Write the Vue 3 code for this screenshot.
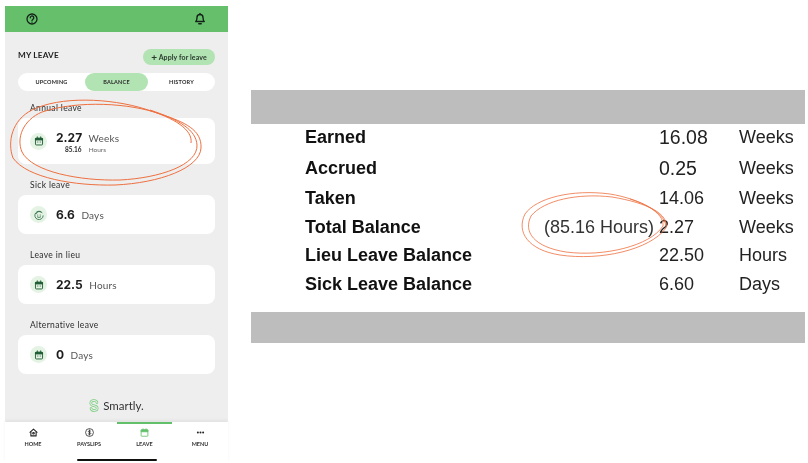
<template>
  <div class="page">
    <div class="phone">
      <header class="top-bar">
        <svg class="top-icon" viewBox="0 0 24 24" fill="none" stroke="#14221a" stroke-width="2.600">
          <circle cx="12" cy="12" r="10" />
          <path d="M8.500 9.500a3.500 3.500 0 1 1 5.400 2.900c-1.200.8-1.900 1.300-1.900 2.800" stroke-linecap="round" />
          <circle cx="12" cy="18.300" r="1.300" fill="#14221a" stroke="none" />
        </svg>
        <svg class="top-icon" viewBox="0 0 24 24" fill="none" stroke="#14221a" stroke-width="2.800">
          <path d="M12 3a6 6 0 0 0-6 6c0 5-1.500 7-2.500 8h17c-1-1-2.500-3-2.500-8a6 6 0 0 0-6-6z" stroke-linejoin="round" />
          <path d="M9.500 21.500h5M12 1v2" stroke-linecap="round" />
        </svg>
      </header>

      <main class="content">
        <div class="title-row">
          <h1>MY LEAVE</h1>
          <button class="apply-btn"><span class="plus">+</span> Apply for leave</button>
        </div>

        <nav class="tabs">
          <span v-for="tab in tabs" :key="tab" class="tab" :class="{ active: tab === 'BALANCE' }">{{ tab }}</span>
        </nav>

        <section v-for="item in leaves" :key="item.label" class="leave" :class="{ tall: item.sub }">
          <h2>{{ item.label }}</h2>
          <div class="card">
            <span class="badge">
              <svg v-if="item.icon === 'calendar'" viewBox="0 0 24 24" fill="none" stroke="#1f5c34" stroke-width="2.200">
                <rect x="3.500" y="5" width="17" height="16.500" rx="2" />
                <path d="M3.500 6h17v3.500h-17z" fill="#1f5c34" />
                <path d="M8 2v4M16 2v4" stroke-linecap="round" />
                <path d="M7 14.500h3.500M13.500 14.500H17" stroke-width="1.600" />
              </svg>
              <svg v-else viewBox="0 0 24 24" fill="none" stroke="#2f6a44" stroke-width="2">
                <path d="M20 7a10 10 0 1 0 2 6" />
                <path d="M17 5a7.500 7.500 0 0 0-12 4" stroke-linecap="round" />
                <circle cx="9" cy="12" r="1.300" fill="#2f6a44" stroke="none" />
                <circle cx="15" cy="12" r="1.300" fill="#2f6a44" stroke="none" />
                <path d="M8 16.500c2.500 1.800 5.500 1.800 8 0" stroke-linecap="round" />
              </svg>
            </span>
            <div class="amounts">
              <div class="amount">
                <strong>{{ item.value }}</strong>
                <span>{{ item.unit }}</span>
              </div>
              <div v-if="item.sub" class="sub-amount">
                <b>{{ item.sub }}</b>
                <span>Hours</span>
              </div>
            </div>
          </div>
        </section>

        <div class="brand">
          <svg viewBox="0 0 20 26" fill="none" stroke-linecap="round">
            <path stroke="#72cc78" stroke-width="5" d="M16 7C15 4 12 3 10 3 6 3 3.500 5.500 3.500 8.500 3.500 11 5 12.500 10 13.500c5 1 6.500 2.500 6.500 5C16.500 21 14 23 10 23 7.500 23 5 22 4 19" />
            <path stroke="#eeeeee" stroke-width="2.200" d="M16 7C15 4 12 3 10 3 6 3 3.500 5.500 3.500 8.500 3.500 11 5 12.500 10 13.500c5 1 6.500 2.500 6.500 5C16.500 21 14 23 10 23 7.500 23 5 22 4 19" />
          </svg>
          <span>Smartly.</span>
        </div>
      </main>

      <footer class="tab-bar">
        <div class="nav-item">
          <svg viewBox="0 0 24 24" fill="none" stroke="#222" stroke-width="2.800" stroke-linejoin="round">
            <path d="M2.500 11.500 12 3l9.500 8.500" stroke-linecap="round" />
            <path d="M5 10v11h14V10" />
            <circle cx="12" cy="14" r="2.200" />
          </svg>
          <span>HOME</span>
        </div>
        <div class="nav-item">
          <svg viewBox="0 0 24 24" fill="none" stroke="#222" stroke-width="2">
            <circle cx="12" cy="12" r="10.500" />
            <path d="M15.500 8.500C14.500 7 9 6.500 9 9.500c0 3 6.500 2 6.500 5 0 3-5.500 2.500-7 1M12 5v14" stroke-linecap="round" />
          </svg>
          <span>PAYSLIPS</span>
        </div>
        <div class="nav-item current">
          <svg viewBox="0 0 24 24" fill="none" stroke="#62c06a" stroke-width="2.200">
            <rect x="3" y="5" width="18" height="17" rx="2" />
            <path d="M3 5h18v5H3z" fill="#62c06a" />
            <path d="M8 2v4M16 2v4" stroke-linecap="round" />
          </svg>
          <span>LEAVE</span>
        </div>
        <div class="nav-item">
          <svg viewBox="0 0 24 24" fill="#222">
            <circle cx="5" cy="12" r="2.600" />
            <circle cx="12" cy="12" r="2.600" />
            <circle cx="19" cy="12" r="2.600" />
          </svg>
          <span>MENU</span>
        </div>
        <i class="home-line"></i>
      </footer>
    </div>

    <div class="statement">
      <div class="band top"></div>
      <div class="rows">
        <div v-for="(row, i) in rows" :key="row.label" class="row" :style="{ height: row.h + 'px' }">
          <b>{{ row.label }}</b>
          <span class="note">{{ row.note }}</span>
          <span class="num" :class="{ big: i < 2 }">{{ row.value }}</span>
          <span>{{ row.unit }}</span>
        </div>
      </div>
      <div class="band"></div>
    </div>

    <svg class="scribble" width="808" height="463" viewBox="0 0 808 463" fill="none" stroke="#ee7040">
      <path stroke-width="1" d="M191 143C193 130 175 118 145 109C110 98 60 96 32 110C12 120 7 142 13 158C27 178 75 186 115 185C160 183 200 168 201 148C202 130 185 122 160 114C130 103 78 100 42 112C23 120 16 138 22 152C32 172 80 181 120 180C160 178 198 165 197 145C196 130 180 120 150 110" />
      <path stroke-width="0.800" d="M666 226C664 212 640 199 610 194C572 189 536 198 525 214C516 232 528 250 560 255C600 261 650 250 666 228C669 214 648 203 612 197C578 193 544 200 531 216C523 232 534 247 566 252C604 257 650 246 663 226C664 216 652 206 630 199" />
    </svg>
  </div>
</template>

<script setup>
const tabs = ['UPCOMING', 'BALANCE', 'HISTORY']

const leaves = [
  { label: 'Annual leave', value: '2.27', unit: 'Weeks', sub: '85.16', icon: 'calendar' },
  { label: 'Sick leave', value: '6.6', unit: 'Days', icon: 'sick' },
  { label: 'Leave in lieu', value: '22.5', unit: 'Hours', icon: 'calendar' },
  { label: 'Alternative leave', value: '0', unit: 'Days', icon: 'calendar' }
]

const rows = [
  { label: 'Earned', value: '16.08', unit: 'Weeks', h: 31 },
  { label: 'Accrued', value: '0.25', unit: 'Weeks', h: 31 },
  { label: 'Taken', value: '14.06', unit: 'Weeks', h: 29 },
  { label: 'Total Balance', note: '(85.16 Hours)', value: '2.27', unit: 'Weeks', h: 29 },
  { label: 'Lieu Leave Balance', value: '22.50', unit: 'Hours', h: 27 },
  { label: 'Sick Leave Balance', value: '6.60', unit: 'Days', h: 30 }
]
</script>

<style>
html,
body {
  background: #fff;
}
</style>

<style scoped>
.page {
  position: relative;
  width: 808px;
  height: 463px;
  overflow: hidden;
  display: flex;
  align-items: flex-start;
  background: #fff;
}

.phone {
  width: 223px;
  height: 457px;
  margin: 6px 23px 0 5px;
  flex: none;
  display: flex;
  flex-direction: column;
  background: #eeeeee;
  font-family: Lato, "Noto Sans", sans-serif;
  color: #222;
  filter: blur(0.35px);
}

.top-bar {
  height: 26px;
  flex: none;
  padding: 0 22px 0 21px;
  display: flex;
  align-items: center;
  justify-content: space-between;
  background: #66c06b;
}

.top-icon {
  width: 12px;
  height: 12px;
}

.content {
  flex: 1;
  padding: 17px 13px 0;
}

.title-row {
  height: 16px;
  display: flex;
  align-items: center;
  justify-content: space-between;
}

.title-row h1 {
  margin: 0 0 4px;
  font-size: 8.200px;
  font-weight: 700;
  letter-spacing: 0.2px;
}

.apply-btn {
  width: 72px;
  height: 16px;
  padding: 0;
  border: none;
  border-radius: 8px;
  background: #b2e3b3;
  color: #2a3a2e;
  font-family: inherit;
  font-size: 7px;
  font-weight: 700;
  letter-spacing: 0.1px;
}

.plus {
  font-size: 10px;
  line-height: 1;
  vertical-align: -1px;
}

.tabs {
  height: 18px;
  margin-top: 8px;
  display: grid;
  grid-template-columns: 67px 63px 1fr;
  background: #fff;
  border-radius: 9px;
}

.tab {
  display: flex;
  align-items: center;
  justify-content: center;
  border-radius: 9px;
  font-size: 5.500px;
  font-weight: 700;
  letter-spacing: 0.2px;
  color: #2b2b2b;
}

.tab.active {
  background: #b2e3b3;
}

.leave {
  margin-top: 12px;
}

.leave + .leave {
  margin-top: 16px;
}

.leave h2 {
  margin: 0 0 5px 12px;
  font-size: 8.500px;
  line-height: 10px;
  font-weight: 400;
  letter-spacing: 0.35px;
  color: #2b2b2b;
}

.card {
  height: 39px;
  padding-left: 12px;
  display: flex;
  align-items: center;
  gap: 9px;
  background: #fff;
  border-radius: 8px;
}

.tall .card {
  height: 46px;
}

.badge {
  width: 17px;
  height: 17px;
  flex: none;
  display: flex;
  align-items: center;
  justify-content: center;
  border-radius: 50%;
  background: #e4f3e4;
}

.badge svg {
  width: 10px;
  height: 10px;
}

.amount {
  display: flex;
  align-items: baseline;
  gap: 6.500px;
  font-size: 10px;
  color: #555;
  letter-spacing: 0.2px;
}

.amount strong {
  font-family: Inter, sans-serif;
  font-size: 12px;
  font-weight: 700;
  letter-spacing: 0;
  color: #1c1c1c;
}

.sub-amount {
  margin-top: 1px;
  display: flex;
  gap: 7px;
  padding-left: 9px;
  font-size: 6.500px;
  color: #666;
}

.sub-amount b {
  color: #2a2a2a;
}

.brand {
  margin-top: 25px;
  display: flex;
  align-items: center;
  justify-content: center;
  gap: 4px;
  font-size: 11.500px;
  color: #333;
}

.brand svg {
  width: 10px;
  height: 13px;
}

.tab-bar {
  position: relative;
  height: 41px;
  flex: none;
  display: grid;
  grid-template-columns: 56px 56px 55px 56px;
  background: #fff;
  box-shadow: 0 -2px 3px rgba(0, 0, 0, 0.05);
}

.nav-item {
  padding-top: 6px;
  display: flex;
  flex-direction: column;
  align-items: center;
  gap: 4px;
  font-size: 5.500px;
  font-weight: 700;
  color: #333;
}

.nav-item svg {
  width: 9px;
  height: 9px;
}

.nav-item.current {
  border-top: 2px solid #62c06a;
  padding-top: 4px;
}

.home-line {
  position: absolute;
  left: 72px;
  bottom: 2px;
  width: 80px;
  height: 2px;
  border-radius: 1px;
  background: #111;
}

.statement {
  width: 554px;
  margin-top: 90px;
  font-family: "Liberation Sans", Arial, sans-serif;
  font-size: 18px;
  color: #222;
  filter: blur(0.3px);
}

.band {
  height: 31px;
  background: #bdbdbd;
}

.band.top {
  height: 34px;
}

.rows {
  height: 188px;
}

.row {
  box-sizing: border-box;
  padding: 0 0 4px 54px;
  display: grid;
  grid-template-columns: 230px 124px 80px 1fr;
  align-items: center;
}

.row b {
  color: #111;
}

.note {
  text-align: right;
  padding-right: 5px;
  color: #333;
}

.num {
  color: #222;
}

.num.big {
  font-size: 19.500px;
}

.scribble {
  position: absolute;
  top: 0;
  left: 0;
  pointer-events: none;
}
</style>
